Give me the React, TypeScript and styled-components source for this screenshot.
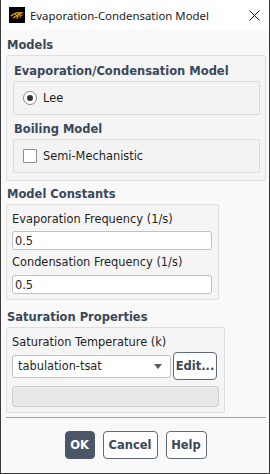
import React from "react";
import styled, { createGlobalStyle } from "styled-components";

const GlobalStyle = createGlobalStyle`
  html, body {
    margin: 0;
    padding: 0;
    background: #ffffff;
  }
  * {
    box-sizing: border-box;
  }
`;

const Window = styled.div`
  width: 270px;
  height: 474px;
  display: flex;
  flex-direction: column;
  border: 1px solid #3a3a3a;
  border-top: none;
  background: #f9f9f9;
  font-family: "DejaVu Sans", Verdana, sans-serif;
  font-size: 11.4px;
  color: #1f1f1f;
`;

const TitleBar = styled.div`
  height: 30px;
  flex: none;
  display: flex;
  align-items: center;
  padding-left: 8px;
  background: #ffffff;
  font-family: "Noto Sans", "Open Sans", sans-serif;
  font-size: 11.4px;
  color: #1a1a1a;
`;

const TitleText = styled.span`
  margin-left: 5px;
  flex: 1;
`;

const CloseButton = styled.div`
  width: 30px;
  height: 30px;
  display: flex;
  align-items: center;
  justify-content: center;
`;

const Body = styled.div`
  flex: 1;
  display: flex;
  flex-direction: column;
  padding: 5px 3px 0 5px;
`;

const SectionTitle = styled.div<{ $top?: number }>`
  font-weight: bold;
  font-size: 11.5px;
  line-height: 20px;
  color: #3b4759;
  padding-left: 1px;
  margin-top: ${({ $top }) => $top ?? 0}px;
`;

const GroupBox = styled.div<{ $width?: number; $pad: string }>`
  width: ${({ $width }) => ($width ? `${$width}px` : "auto")};
  background: #f5f5f5;
  border: 1px solid #dedede;
  border-radius: 2px;
  padding: ${({ $pad }) => $pad};
  display: flex;
  flex-direction: column;
`;

const SubTitle = styled(SectionTitle)`
  padding-left: 1px;
`;

const OptionBox = styled.div`
  height: 34px;
  background: #f3f3f3;
  border: 1px solid #dcdcdc;
  border-radius: 2px;
  display: flex;
  align-items: center;
  padding-left: 9px;
  gap: 6px;
`;

const Radio = styled.span`
  width: 14px;
  height: 14px;
  border-radius: 50%;
  border: 1px solid #8a8a8a;
  background: #ffffff;
  display: flex;
  align-items: center;
  justify-content: center;
  &::after {
    content: "";
    width: 6px;
    height: 6px;
    border-radius: 50%;
    background: #333333;
  }
`;

const Checkbox = styled.span`
  width: 14px;
  height: 14px;
  border: 1px solid #8f8f8f;
  border-radius: 1px;
  background: #ffffff;
`;

const Label = styled.div<{ $top?: number }>`
  line-height: 18px;
  margin-top: ${({ $top }) => $top ?? 0}px;
`;

const TextInput = styled.div<{ $top?: number }>`
  height: 19px;
  margin-top: ${({ $top }) => $top ?? 0}px;
  margin-right: 1px;
  background: #ffffff;
  border: 1px solid #b8c1ce;
  border-radius: 3px;
  padding-left: 2px;
  display: flex;
  align-items: center;
`;

const Row = styled.div`
  display: flex;
  align-items: center;
  gap: 2px;
  margin-top: 1px;
`;

const Select = styled.div`
  width: 159px;
  height: 23px;
  background: #ffffff;
  border: 1px solid #b8c1ce;
  border-radius: 3px;
  padding: 0 8px 0 5px;
  display: flex;
  align-items: center;
  justify-content: space-between;
`;

const Caret = styled.span`
  width: 0;
  height: 0;
  border-left: 4px solid transparent;
  border-right: 4px solid transparent;
  border-top: 5px solid #5b5b5b;
`;

const Button = styled.div<{ $primary?: boolean; $width: number }>`
  width: ${({ $width }) => $width}px;
  height: 28px;
  border-radius: 4px;
  border: 1px solid ${({ $primary }) => ($primary ? "#4b5768" : "#5f6b7c")};
  background: ${({ $primary }) => ($primary ? "#4b5768" : "#ffffff")};
  color: ${({ $primary }) => ($primary ? "#ffffff" : "#3b4759")};
  font-weight: bold;
  font-size: 11.5px;
  display: flex;
  align-items: center;
  justify-content: center;
`;

const DisabledBar = styled.div`
  height: 21px;
  margin-top: 6px;
  background: #e9e9e9;
  border: 1px solid #cdcdcd;
  border-radius: 3px;
`;

const Separator = styled.div`
  height: 1px;
  background: #a3a3a3;
  margin-top: 4px;
`;

const Footer = styled.div`
  display: flex;
  justify-content: center;
  gap: 8px;
  padding-top: 13px;
  padding-right: 1px;
`;

function FluentIcon() {
  return (
    <svg width="16" height="16" viewBox="0 0 16 16">
      <rect width="16" height="16" fill="#000" />
      <path d="M2 9 C5 6, 9 5, 13 6 C11 7, 7 8, 4 11" stroke="#e0a200" strokeWidth="1.3" fill="none" />
      <path d="M4 11 C7 9, 10 9, 14 8" stroke="#b57900" strokeWidth="1.1" fill="none" />
      <path d="M6 7 C8 8, 9 10, 8 12" stroke="#f2c230" strokeWidth="1" fill="none" />
      <path d="M9 6 C11 7, 12 9, 11 11" stroke="#d69a10" strokeWidth="1" fill="none" />
    </svg>
  );
}

function CloseIcon() {
  return (
    <svg width="11" height="11" viewBox="0 0 11 11">
      <path d="M0.5 0.5 L10.5 10.5 M10.5 0.5 L0.5 10.5" stroke="#111" strokeWidth="1" />
    </svg>
  );
}

export default function App() {
  return (
    <>
      <GlobalStyle />
      <Window>
        <TitleBar>
          <FluentIcon />
          <TitleText>Evaporation-Condensation Model</TitleText>
          <CloseButton>
            <CloseIcon />
          </CloseButton>
        </TitleBar>
        <Body>
          <SectionTitle>Models</SectionTitle>
          <GroupBox $pad="5px 5px 7px 6px">
            <SubTitle>Evaporation/Condensation Model</SubTitle>
            <OptionBox>
              <Radio />
              <span>Lee</span>
            </OptionBox>
            <SubTitle $top={4}>Boiling Model</SubTitle>
            <OptionBox>
              <Checkbox />
              <span>Semi-Mechanistic</span>
            </OptionBox>
          </GroupBox>

          <SectionTitle $top={3}>Model Constants</SectionTitle>
          <GroupBox $width={213} $pad="5px 5px 5px 5px">
            <Label>Evaporation Frequency (1/s)</Label>
            <TextInput $top={3}>0.5</TextInput>
            <Label $top={3}>Condensation Frequency (1/s)</Label>
            <TextInput $top={4}>0.5</TextInput>
          </GroupBox>

          <SectionTitle $top={7}>Saturation Properties</SectionTitle>
          <GroupBox $width={219} $pad="5px 5px 5px 5px">
            <Label>Saturation Temperature (k)</Label>
            <Row>
              <Select>
                <span>tabulation-tsat</span>
                <Caret />
              </Select>
              <Button $width={44}>Edit...</Button>
            </Row>
            <DisabledBar />
          </GroupBox>

          <Separator />
          <Footer>
            <Button $primary $width={30}>OK</Button>
            <Button $width={55}>Cancel</Button>
            <Button $width={41}>Help</Button>
          </Footer>
        </Body>
      </Window>
    </>
  );
}
